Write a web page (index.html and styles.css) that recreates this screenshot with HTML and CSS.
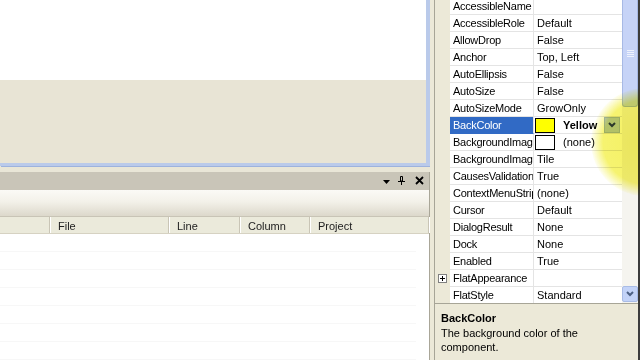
FILE: index.html
```html
<!DOCTYPE html>
<html lang="en">
<head>
    <meta charset="UTF-8">
    <title>Properties</title>
    <link rel="stylesheet" href="styles.css">
</head>
<body>
<div class="ide">
    <!-- Designer + error list -->
    <div class="left">
        <div class="designer">
            <div class="form">
                <div class="form-client"></div>
                <div class="form-rest"></div>
            </div>
        </div>

        <div class="error-list">
            <div class="pane-title">
                <svg class="ico-drop" width="7" height="4" viewBox="0 0 7 4"><path d="M0 0H7L3.5 4Z" fill="#000"/></svg>
                <svg class="ico-pin" width="9" height="9" viewBox="0 0 9 9"><path d="M3.5 0.5H5.5V5H3.5Z M1 5.5H8 M4.5 5.5V9" stroke="#000" fill="none" stroke-width="1"/></svg>
                <svg class="ico-close" width="9" height="9" viewBox="0 0 9 9"><path d="M1 1L8 8M8 1L1 8" stroke="#000" stroke-width="1.8"/></svg>
            </div>
            <div class="pane-toolbar"></div>
            <div class="list-header">
                <div class="col col-0"></div>
                <div class="col col-file">File</div>
                <div class="col col-line">Line</div>
                <div class="col col-column">Column</div>
                <div class="col col-project">Project</div>
            </div>
            <div class="list-body"></div>
        </div>
    </div>

    <div class="splitter"></div>

    <!-- Property grid -->
    <div class="props">
        <div class="grid-area">
            <div class="rows">
                <div class="row"><div class="gutter"></div><div class="name">AccessibleName</div><div class="value"></div></div>
                <div class="row"><div class="gutter"></div><div class="name">AccessibleRole</div><div class="value">Default</div></div>
                <div class="row"><div class="gutter"></div><div class="name">AllowDrop</div><div class="value">False</div></div>
                <div class="row"><div class="gutter"></div><div class="name">Anchor</div><div class="value">Top, Left</div></div>
                <div class="row"><div class="gutter"></div><div class="name">AutoEllipsis</div><div class="value">False</div></div>
                <div class="row"><div class="gutter"></div><div class="name">AutoSize</div><div class="value">False</div></div>
                <div class="row"><div class="gutter"></div><div class="name">AutoSizeMode</div><div class="value">GrowOnly</div></div>
                <div class="row">
                    <div class="gutter"></div>
                    <div class="name selected">BackColor</div>
                    <div class="value value-swatch">
                        <span class="swatch swatch-yellow"></span>
                        <b>Yellow</b>
                        <span class="drop-btn">
                            <svg width="8" height="6" viewBox="0 0 8 6"><path d="M1 1L4 4L7 1" stroke="#2c3a63" stroke-width="2" fill="none"/></svg>
                        </span>
                    </div>
                </div>
                <div class="row"><div class="gutter"></div><div class="name">BackgroundImage</div><div class="value value-swatch"><span class="swatch"></span>(none)</div></div>
                <div class="row"><div class="gutter"></div><div class="name">BackgroundImageLayout</div><div class="value">Tile</div></div>
                <div class="row"><div class="gutter"></div><div class="name">CausesValidation</div><div class="value">True</div></div>
                <div class="row"><div class="gutter"></div><div class="name">ContextMenuStrip</div><div class="value">(none)</div></div>
                <div class="row"><div class="gutter"></div><div class="name">Cursor</div><div class="value">Default</div></div>
                <div class="row"><div class="gutter"></div><div class="name">DialogResult</div><div class="value">None</div></div>
                <div class="row"><div class="gutter"></div><div class="name">Dock</div><div class="value">None</div></div>
                <div class="row"><div class="gutter"></div><div class="name">Enabled</div><div class="value">True</div></div>
                <div class="row">
                    <div class="gutter">
                        <svg width="9" height="9" viewBox="0 0 9 9"><rect x="0.5" y="0.5" width="8" height="8" fill="#fff" stroke="#808080"/><path d="M2 4.5H7M4.5 2V7" stroke="#000"/></svg>
                    </div>
                    <div class="name">FlatAppearance</div><div class="value"></div>
                </div>
                <div class="row"><div class="gutter"></div><div class="name">FlatStyle</div><div class="value">Standard</div></div>
            </div>

            <div class="vscroll">
                <div class="thumb">
                    <svg width="7" height="7" viewBox="0 0 7 7"><path d="M0 0.5H7M0 2.5H7M0 4.5H7M0 6.5H7" stroke="#eef2fd"/></svg>
                </div>
                <div class="track"></div>
                <div class="sbtn">
                    <svg width="8" height="6" viewBox="0 0 8 6"><path d="M1 1L4 4L7 1" stroke="#4d6185" stroke-width="2" fill="none"/></svg>
                </div>
            </div>
        </div>

        <div class="desc">
            <div class="desc-title">BackColor</div>
            <div>The background color of the component.</div>
        </div>

        <!-- mouse highlight from the screen recording -->
        <div class="cursor-spot"></div>
    </div>
</div>
</body>
</html>
```

FILE: styles.css
```css
body {
    margin: 0;
    width: 640px;
    height: 360px;
    overflow: hidden;
    font-family: "Liberation Sans", Arial, sans-serif;
    font-size: 11px;
    color: #000;
    background: #ece9d8;
}

.ide {
    display: flex;
    height: 360px;
}

/* Left side: designer and error list */
.left {
    width: 430px;
    display: flex;
    flex-direction: column;
}

.designer {
    height: 172px;
    background: #e9e6d7;
}

.form {
    height: 166px;
    box-sizing: border-box;
    border-right: 4px solid #bacaea;
    border-bottom: 3px solid #bacaea;
    box-shadow: 1px 1px 0 #9db2dd;
    display: flex;
    flex-direction: column;
}

.form-client {
    height: 80px;
    background: #fff;
}

.form-rest {
    flex: 1;
    background: #e8e4d5;
}

.error-list {
    flex: 1;
    display: flex;
    flex-direction: column;
    border-right: 1px solid #a9a698;
    background: #fff;
}

.pane-title {
    height: 18px;
    background: #c9c5b8;
    display: flex;
    justify-content: flex-end;
    align-items: center;
    padding-right: 5px;
}

.ico-drop { margin-right: 7px; margin-top: 2px; }
.ico-pin { margin-right: 9px; margin-top: -1px; }
.ico-close { margin-top: -1px; }

.pane-toolbar {
    height: 26px;
    background: linear-gradient(#fbfaf6, #f3f1e9 45%, #dcd8cb);
    border-bottom: 1px solid #c8c4b6;
}

.list-header {
    height: 16px;
    display: flex;
    background: #ebeadb;
    border-bottom: 1px solid #d6d2c2;
}

.col {
    box-sizing: border-box;
    border-right: 1px solid #c9c5b6;
    box-shadow: 1px 0 0 #fff;
    padding-left: 8px;
    line-height: 18px;
    color: #222;
    white-space: nowrap;
}

.col-0 { width: 50px; }
.col-file { width: 119px; }
.col-line { width: 71px; }
.col-column { width: 70px; }
.col-project { width: 119px; }

.list-body {
    flex: 1;
    background:
        repeating-linear-gradient(#fff 0, #fff 17px, #f7f7f7 17px, #f7f7f7 18px) 0 0 / 416px 100% no-repeat,
        #fff;
}

.splitter {
    width: 4px;
    background: #ece9d8;
}

/* Property grid */
.props {
    position: relative;
    width: 206px;
    box-sizing: border-box;
    border-left: 1px solid #a7a597;
    border-right: 2px solid #3c3c3c;
    display: flex;
    flex-direction: column;
    background: #ece9d8;
}

.grid-area {
    height: 303px;
    display: flex;
    overflow: hidden;
}

.rows {
    width: 187px;
    margin-top: -2px;
}

.row {
    display: flex;
    height: 17px;
}

.gutter {
    width: 15px;
    background: #ece9d8;
    display: flex;
    align-items: center;
    justify-content: center;
}

.name {
    width: 84px;
    box-sizing: border-box;
    border-right: 1px solid #e4e4e4;
    border-bottom: 1px solid #e4e4e4;
    padding-left: 3px;
    line-height: 17px;
    letter-spacing: -0.25px;
    white-space: nowrap;
    overflow: hidden;
    background: #fff;
}

.name.selected {
    background: #316ac5;
    border-bottom-color: #316ac5;
    color: #fff;
}

.value {
    flex: 1;
    border-bottom: 1px solid #e4e4e4;
    background: #fff;
    padding-left: 3px;
    line-height: 17px;
    white-space: nowrap;
    display: flex;
    align-items: center;
}

.value-swatch {
    padding-left: 1px;
}

.swatch {
    width: 20px;
    height: 15px;
    box-sizing: border-box;
    border: 1px solid #000;
    background: #fff;
    margin-right: 8px;
}

.swatch-yellow {
    background: #ffff00;
}

.drop-btn {
    margin-left: auto;
    margin-right: 2px;
    width: 16px;
    height: 16px;
    box-sizing: border-box;
    background: #b9cbf2;
    border: 1px solid #a2b6e2;
    display: flex;
    align-items: center;
    justify-content: center;
}

.vscroll {
    width: 16px;
    display: flex;
    flex-direction: column;
    background: #f5f4ef;
    padding-bottom: 1px;
}

.thumb {
    height: 107px;
    box-sizing: border-box;
    background: #c6d3f7;
    border: 1px solid #a7b9e5;
    border-top: none;
    border-radius: 0 0 3px 3px;
    display: flex;
    align-items: center;
    justify-content: center;
}

.track {
    flex: 1;
}

.sbtn {
    height: 16px;
    box-sizing: border-box;
    background: #c3d3f8;
    border: 1px solid #a9bce6;
    border-radius: 2px;
    display: flex;
    align-items: center;
    justify-content: center;
}

.desc {
    flex: 1;
    border-top: 1px solid #a7a597;
    padding: 7px 5px 0 6px;
    line-height: 14px;
}

.desc-title {
    font-weight: bold;
    margin-bottom: 1px;
}

.cursor-spot {
    position: absolute;
    left: 156px;
    top: 88px;
    width: 108px;
    height: 108px;
    border-radius: 50%;
    background: radial-gradient(circle, rgb(244, 240, 96) 0, rgb(246, 243, 112) 55%, rgba(255, 255, 210, 0) 72%);
    mix-blend-mode: multiply;
    pointer-events: none;
}
```
